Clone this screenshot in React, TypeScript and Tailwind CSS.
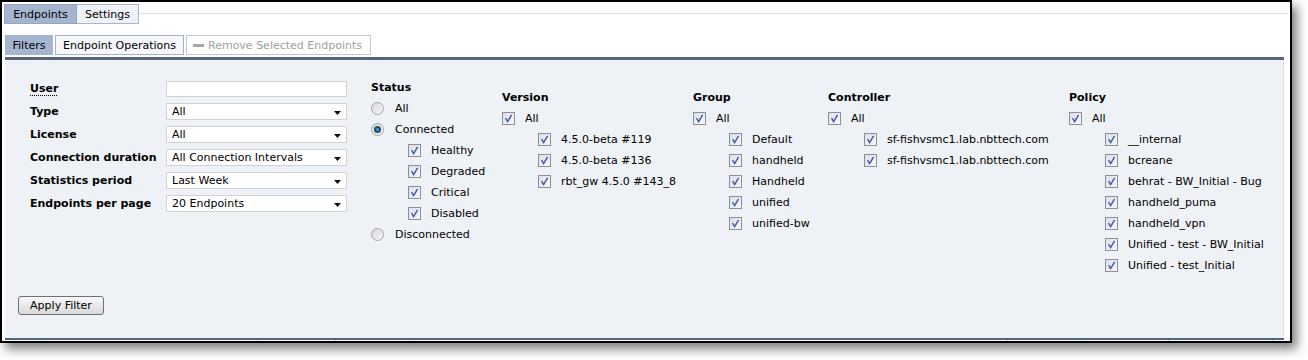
import React from "react"

function Check() {
  return (
    <span className="w-[13px] h-[13px] border border-[#8e8f91] bg-gradient-to-br from-[#d9e0ec] to-[#f6f8fb] flex items-center justify-center shrink-0">
      <svg viewBox="0 0 11 11" className="w-[11px] h-[11px]">
        <path d="M2.6 5.2 L4.6 8.6 L8.6 1.8" stroke="#4a5a9e" strokeWidth="1.5" fill="none" />
      </svg>
    </span>
  )
}

function Radio({ on }: { on?: boolean }) {
  return (
    <span className="w-[13px] h-[13px] rounded-full border border-[#a3a5a8] bg-gradient-to-br from-[#d8d8d8] to-[#f7f7f7] flex items-center justify-center shrink-0">
      {on && (
        <span className="w-[7px] h-[7px] rounded-full bg-[#1e4f6e] flex items-center justify-center">
          <span className="w-[3px] h-[3px] rounded-full bg-[#3fa3d6]" />
        </span>
      )}
    </span>
  )
}

function CheckRow({ label, indent }: { label: string; indent?: boolean }) {
  return (
    <div className={`flex items-center h-[21px] ${indent ? "pl-[36px]" : ""}`}>
      <Check />
      <span className="ml-[10px] whitespace-nowrap">{label}</span>
    </div>
  )
}

function CheckGroup({ title, items, width }: { title: string; items: string[]; width: string }) {
  return (
    <div className={`${width} pt-[10px] shrink-0`}>
      <div className="h-[21px] flex items-center font-bold">{title}</div>
      <CheckRow label="All" />
      {items.map((it, i) => (
        <CheckRow key={i} label={it} indent />
      ))}
    </div>
  )
}

function Select({ value }: { value: string }) {
  return (
    <div className="w-[181px] h-[17px] bg-white border border-[#cfd2d7] flex items-center justify-between pl-[5px] pr-[5px]">
      <span>{value}</span>
      <svg viewBox="0 0 7 4" className="w-[7px] h-[4px] mt-[3px]">
        <path d="M0 0 H7 L3.5 4 Z" fill="#111" />
      </svg>
    </div>
  )
}

const formRows = [
  { label: "Type", value: "All" },
  { label: "License", value: "All" },
  { label: "Connection duration", value: "All Connection Intervals" },
  { label: "Statistics period", value: "Last Week" },
  { label: "Endpoints per page", value: "20 Endpoints" },
]

export default function App() {
  return (
    <div className="w-[1308px] h-[360px] bg-white text-[11px] text-black font-['DejaVu_Sans',Verdana,sans-serif] leading-none">
      <div className="w-[1292px] h-[343px] border-2 border-black bg-white shadow-[5px_6px_10px_rgba(0,0,0,0.5)] flex flex-col">
        {/* top tabs */}
        <div className="flex h-[20px] mt-[2px] ml-[2px] mr-[3px] shrink-0">
          <div className="w-[73px] bg-[#a5b5cf] border border-[#95a6c2] flex items-center justify-center">Endpoints</div>
          <div className="w-[62px] bg-[#eef1f7] border border-[#a9b6cc] border-l-0 flex items-center justify-center">Settings</div>
          <div className="flex-1 mt-[9px] border-t border-[#dcdcdc]" />
        </div>

        {/* sub tabs */}
        <div className="flex h-[20px] mt-[11px] ml-[3px] gap-[2px] shrink-0">
          <div className="w-[48px] bg-[#a5b5cf] flex items-center justify-center">Filters</div>
          <div className="w-[129px] bg-[#f5f7fb] border border-[#a2b2cc] flex items-center justify-center">Endpoint Operations</div>
          <div className="w-[185px] bg-white border border-[#bdc8d9] flex items-center pl-[6px] text-[#a0a0a0]">
            <span className="w-[11px] h-[3px] bg-[#a8a8a8] mr-[4px]" />
            Remove Selected Endpoints
          </div>
        </div>

        <div className="ml-[3px] w-[1279px] h-[3px] mt-[2px] bg-[#56657f] shrink-0" />

        {/* filter panel */}
        <div className="ml-[3px] w-[1279px] h-[278px] bg-[#eef1f6] border-r border-[#dde2ea] pt-[17px] shrink-0">
          <div className="flex pl-[25px] h-[199px]">
            {/* form */}
            <div className="w-[341px] shrink-0">
              <div className="flex items-center h-[23px]">
                <span className="w-[136px] font-bold underline decoration-dotted underline-offset-[3px]">User</span>
                <div className="w-[181px] h-[16px] bg-white border border-[#cfd2d7]" />
              </div>
              {formRows.map((r) => (
                <div key={r.label} className="flex items-center h-[23px]">
                  <span className="w-[136px] font-bold whitespace-nowrap">{r.label}</span>
                  <Select value={r.value} />
                </div>
              ))}
            </div>

            {/* status */}
            <div className="w-[131px] shrink-0">
              <div className="h-[21px] flex items-center font-bold">Status</div>
              <div className="flex items-center h-[21px]">
                <Radio />
                <span className="ml-[11px]">All</span>
              </div>
              <div className="flex items-center h-[21px]">
                <Radio on />
                <span className="ml-[11px]">Connected</span>
              </div>
              {["Healthy", "Degraded", "Critical", "Disabled"].map((s) => (
                <div key={s} className="flex items-center h-[21px] pl-[37px]">
                  <Check />
                  <span className="ml-[10px]">{s}</span>
                </div>
              ))}
              <div className="flex items-center h-[21px]">
                <Radio />
                <span className="ml-[11px]">Disconnected</span>
              </div>
            </div>

            <CheckGroup
              title="Version"
              width="w-[191px]"
              items={["4.5.0-beta #119", "4.5.0-beta #136", "rbt_gw 4.5.0 #143_8"]}
            />
            <CheckGroup
              title="Group"
              width="w-[135px]"
              items={["Default", "handheld", "Handheld", "unified", "unified-bw"]}
            />
            <CheckGroup
              title="Controller"
              width="w-[241px]"
              items={["sf-fishvsmc1.lab.nbttech.com", "sf-fishvsmc1.lab.nbttech.com"]}
            />
            <CheckGroup
              title="Policy"
              width="flex-1"
              items={[
                "__internal",
                "bcreane",
                "behrat - BW_Initial - Bug",
                "handheld_puma",
                "handheld_vpn",
                "Unified - test - BW_Initial",
                "Unified - test_Initial",
              ]}
            />
          </div>

          <button className="ml-[13px] mt-[20px] w-[86px] h-[19px] rounded-[3px] border border-[#707070] bg-gradient-to-b from-[#f8f8f8] to-[#d9d9d9] text-[11px] text-black">
            Apply Filter
          </button>
        </div>

        <div className="ml-[3px] w-[1279px] h-[2px] bg-[#56657f] shrink-0" />
        <div className="ml-[3px] w-[1279px] h-[1px] flex shrink-0">
          <div className="w-[37px]" />
          <div className="w-[215px] border-l border-[#c9ced8]" />
          <div className="w-[78px] border-l border-[#c9ced8]" />
          <div className="w-[78px] border-l border-[#c9ced8]" />
          <div className="w-[594px] border-l border-[#c9ced8]" />
          <div className="w-[75px] border-l border-[#c9ced8]" />
          <div className="w-[86px] border-l border-[#c9ced8]" />
          <div className="w-[104px] border-l border-[#c9ced8]" />
          <div className="flex-1 border-l border-[#c9ced8]" />
        </div>
      </div>
    </div>
  )
}
